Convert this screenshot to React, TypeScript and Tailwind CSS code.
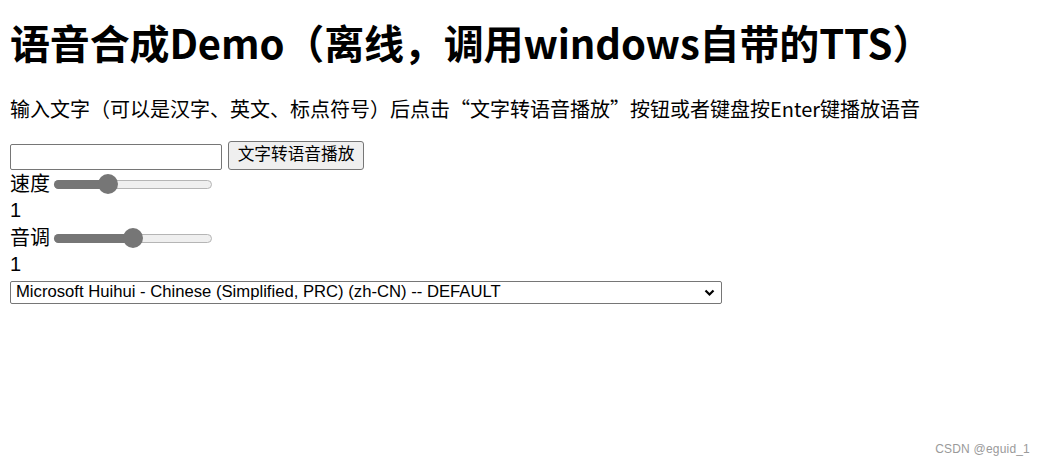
import React from "react";

function Slider({ pct }: { pct: number }) {
  // track 158px wide, thumb 20px
  const travel = 158 - 20;
  const left = Math.round(travel * pct);
  return (
    <div className="relative ml-[4px] h-[20px] w-[158px]">
      <div className="absolute left-0 right-0 top-[6px] h-[9px] rounded-full border border-[#b5b5b5] bg-[#efefef]" />
      <div
        className="absolute left-0 top-[6px] h-[9px] rounded-full bg-[#767676]"
        style={{ width: left + 10 }}
      />
      <div
        className="absolute top-0 h-[20px] w-[20px] rounded-full bg-[#767676]"
        style={{ left }}
      />
    </div>
  );
}

export default function App() {
  return (
    <div className="relative h-[466px] w-[1045px] overflow-hidden bg-white text-black">
      <div className="px-[10px] pt-[16px]">
        <h1
          className="text-[40px] font-bold leading-[53px] tracking-[-0.14px]"
          style={{ fontFamily: '"Noto Sans CJK SC", sans-serif' }}
        >
          语音合成Demo（离线，调用windows自带的TTS）
        </h1>
        <p
          className="mt-[26px] text-[20px] leading-[27px]"
          style={{ fontFamily: '"Noto Sans CJK SC", sans-serif' }}
        >
          输入文字（可以是汉字、英文、标点符号）后点击“文字转语音播放”按钮或者键盘按Enter键播放语音
        </p>
        <div
          className="mt-[19px]"
          style={{ fontFamily: '"Liberation Sans", "Noto Sans CJK SC", sans-serif' }}
        >
          <div className="flex h-[29px] items-end gap-[6px]">
            <input
              type="text"
              className="h-[26px] w-[212px] rounded-[2px] border border-[#767676] bg-white px-[2px] text-[16.67px] outline-none"
            />
            <button className="flex h-[29px] w-[136px] items-center justify-center rounded-[3px] border border-[#767676] bg-[#efefef] text-[16.67px] leading-none">
              文字转语音播放
            </button>
          </div>
          <div className="flex h-[27px] items-center text-[20px]">
            <span>速度</span>
            <Slider pct={0.32} />
          </div>
          <div className="h-[27px] text-[20px] leading-[27px]">1</div>
          <div className="flex h-[27px] items-center text-[20px]">
            <span>音调</span>
            <Slider pct={0.5} />
          </div>
          <div className="h-[27px] text-[20px] leading-[27px]">1</div>
          <div className="mt-[3px] flex h-[23px] w-[712px] items-center justify-between rounded-[2px] border border-[#767676] bg-white pl-[5px] pr-[6px] text-[16.67px] leading-none">
            <span>Microsoft Huihui - Chinese (Simplified, PRC) (zh-CN) -- DEFAULT</span>
            <svg width="11" height="8" viewBox="0 0 11 8" fill="none">
              <path d="M1.5 1.5 L5.5 5.5 L9.5 1.5" stroke="#000" strokeWidth="2.2" />
            </svg>
          </div>
        </div>
      </div>
      <div
        className="absolute bottom-[11px] right-[15px] text-[12px] leading-none tracking-[0.2px] text-[#9a9a9a]"
        style={{ fontFamily: '"Liberation Sans", sans-serif' }}
      >
        CSDN @eguid_1
      </div>
    </div>
  );
}
